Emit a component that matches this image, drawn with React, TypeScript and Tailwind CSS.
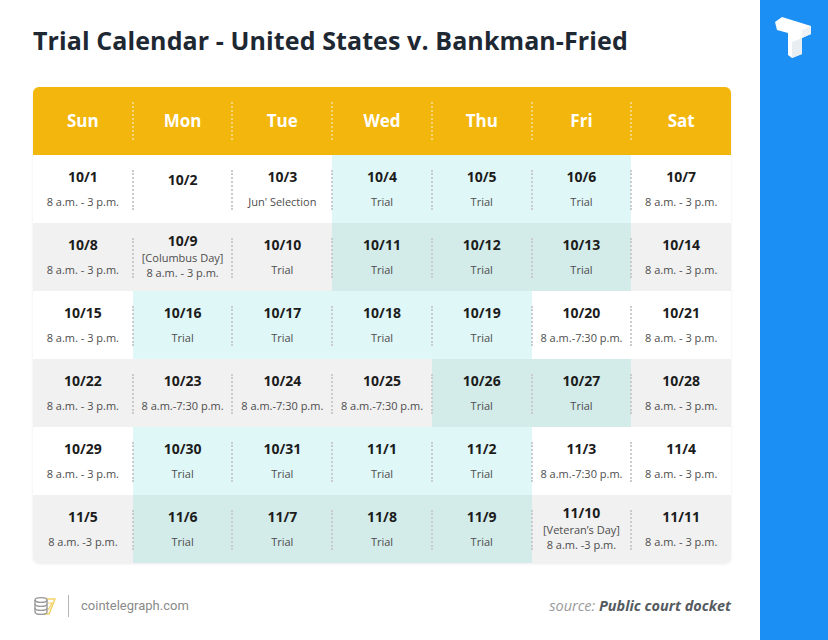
import React from "react";

type Cell = { d: string; sub?: string; note?: string; trial?: boolean };

const A = "8 a.m. - 3 p.m.";
const L = "8 a.m.-7:30 p.m.";
const T: Cell["sub"] = "Trial";

const days = ["Sun", "Mon", "Tue", "Wed", "Thu", "Fri", "Sat"];

const weeks: Cell[][] = [
  [
    { d: "10/1", sub: A },
    { d: "10/2" },
    { d: "10/3", sub: "Jun' Selection" },
    { d: "10/4", sub: T, trial: true },
    { d: "10/5", sub: T, trial: true },
    { d: "10/6", sub: T, trial: true },
    { d: "10/7", sub: A },
  ],
  [
    { d: "10/8", sub: A },
    { d: "10/9", note: "[Columbus Day]", sub: A },
    { d: "10/10", sub: T },
    { d: "10/11", sub: T, trial: true },
    { d: "10/12", sub: T, trial: true },
    { d: "10/13", sub: T, trial: true },
    { d: "10/14", sub: A },
  ],
  [
    { d: "10/15", sub: A },
    { d: "10/16", sub: T, trial: true },
    { d: "10/17", sub: T, trial: true },
    { d: "10/18", sub: T, trial: true },
    { d: "10/19", sub: T, trial: true },
    { d: "10/20", sub: L },
    { d: "10/21", sub: A },
  ],
  [
    { d: "10/22", sub: A },
    { d: "10/23", sub: L },
    { d: "10/24", sub: L },
    { d: "10/25", sub: L },
    { d: "10/26", sub: T, trial: true },
    { d: "10/27", sub: T, trial: true },
    { d: "10/28", sub: A },
  ],
  [
    { d: "10/29", sub: A },
    { d: "10/30", sub: T, trial: true },
    { d: "10/31", sub: T, trial: true },
    { d: "11/1", sub: T, trial: true },
    { d: "11/2", sub: T, trial: true },
    { d: "11/3", sub: L },
    { d: "11/4", sub: A },
  ],
  [
    { d: "11/5", sub: "8 a.m. -3 p.m." },
    { d: "11/6", sub: T, trial: true },
    { d: "11/7", sub: T, trial: true },
    { d: "11/8", sub: T, trial: true },
    { d: "11/9", sub: T, trial: true },
    { d: "11/10", note: "[Veteran\u2019s Day]", sub: "8 a.m. -3 p.m." },
    { d: "11/11", sub: A },
  ],
];

function cellBg(shaded: boolean, trial?: boolean) {
  if (shaded) return trial ? "bg-[#d3ecea]" : "bg-[#f1f1f1]";
  return trial ? "bg-[#e0f7f7]" : "bg-white";
}

function DayCell({ c, first, shaded }: { c: Cell; first: boolean; shaded: boolean }) {
  const sep = first
    ? ""
    : "before:content-[''] before:absolute before:left-[-1px] before:top-[15px] before:bottom-[13px] before:border-l-2 before:border-dotted before:border-[#c9cccc]";
  return (
    <div className={`relative flex-1 h-[68px] flex flex-col items-center text-center ${cellBg(shaded, c.trial)} ${sep}`}>
      {c.note ? (
        <>
          <p className="pt-[8px] text-[14px] leading-[19px] font-bold text-[#1c1c1c]">{c.d}</p>
          <p className="text-[11px] leading-[15px] text-[#4d4d4d]">{c.note}</p>
          <p className="text-[11px] leading-[15px] text-[#4d4d4d]">{c.sub}</p>
        </>
      ) : c.sub ? (
        <>
          <p className="pt-[13px] text-[14px] leading-[18px] font-bold text-[#1c1c1c]">{c.d}</p>
          <p className="mt-[8px] text-[11px] leading-[16px] text-[#4d4d4d]">{c.sub}</p>
        </>
      ) : (
        <p className="pt-[16px] text-[14px] leading-[18px] font-bold text-[#1c1c1c]">{c.d}</p>
      )}
    </div>
  );
}

function CoinLogo() {
  return (
    <svg width="24" height="24" viewBox="0 0 24 24" fill="none">
      <path d="M12 5 L22 5 L16 20 L11 20" stroke="#f1d36a" strokeWidth="1.6" strokeLinejoin="round" />
      <path d="M14 9 L19 9 L15 16" stroke="#f1d36a" strokeWidth="1.2" />
      <ellipse cx="8" cy="6" rx="6" ry="2.4" stroke="#9a9a9a" strokeWidth="1.4" fill="white" />
      <path d="M2 6 v4 c0 1.4 2.7 2.4 6 2.4 s6 -1 6 -2.4 v-4" stroke="#9a9a9a" strokeWidth="1.4" />
      <path d="M2 10 v4 c0 1.4 2.7 2.4 6 2.4 s6 -1 6 -2.4 v-4" stroke="#9a9a9a" strokeWidth="1.4" />
      <path d="M2 14 v4 c0 1.4 2.7 2.4 6 2.4 s6 -1 6 -2.4 v-4" stroke="#9a9a9a" strokeWidth="1.4" />
    </svg>
  );
}

function BrandMark() {
  return (
    <svg width="40" height="44" viewBox="0 0 40 44">
      <polygon points="1,7 8,2 37,11 37,19 28,23 28,39 18,43 14,40 14,18 3,15" fill="#ffffff" />
      <polygon points="28,23 37,19 37,11 28,15" fill="#eef2f6" />
      <polygon points="18,43 28,39 28,23 18,27" fill="#e9eef3" />
    </svg>
  );
}

export default function App() {
  return (
    <div className="flex w-[828px] h-[640px] bg-white font-['Open_Sans',sans-serif] overflow-hidden">
      <div className="flex-1 pl-[33px] pr-[29px]">
        <h1 className="pt-[25px] text-[25px] leading-[30px] font-bold text-[#1e2833] tracking-[0.1px]">
          Trial Calendar - United States v. Bankman-Fried
        </h1>

        <div className="mt-[32px] rounded-[6px] overflow-hidden shadow-[0_1px_3px_rgba(0,0,0,0.08)]">
          <div className="flex bg-[#f2b60c]">
            {days.map((d, i) => (
              <div
                key={d}
                className={`relative flex-1 h-[68px] flex items-center justify-center ${
                  i === 0
                    ? ""
                    : "before:content-[''] before:absolute before:left-[-1px] before:top-[15px] before:bottom-[15px] before:border-l-2 before:border-dotted before:border-[#f6d47a]"
                }`}
              >
                <span className="text-[17px] font-bold text-white">{d}</span>
              </div>
            ))}
          </div>
          {weeks.map((w, ri) => (
            <div key={ri} className="flex">
              {w.map((c, ci) => (
                <DayCell key={c.d} c={c} first={ci === 0} shaded={ri % 2 === 1} />
              ))}
            </div>
          ))}
        </div>

        <div className="mt-[32px] h-[22px] flex items-center justify-between">
          <div className="flex items-center">
            <CoinLogo />
            <div className="ml-[11px] w-px h-[22px] bg-[#b5b5b5]" />
            <span className="ml-[12px] font-['Roboto',sans-serif] text-[13px] text-[#8a8a8a]">cointelegraph.com</span>
          </div>
          <p className="text-[14.5px] italic text-[#9a9a9a]">
            source: <span className="font-bold text-[#555b60]">Public court docket</span>
          </p>
        </div>
      </div>
      <div className="w-[68px] h-full bg-[#1b8ff3] flex justify-center pt-[15px]">
        <BrandMark />
      </div>
    </div>
  );
}
